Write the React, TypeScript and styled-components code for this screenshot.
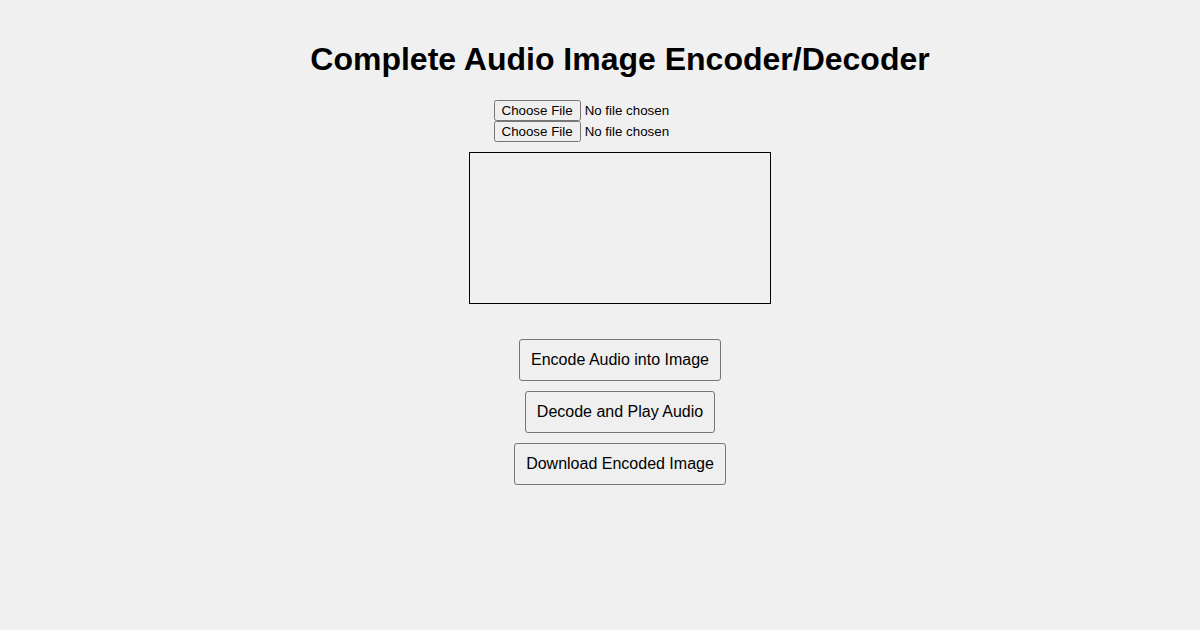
import React from "react";
import styled, { createGlobalStyle } from "styled-components";

const Global = createGlobalStyle`
  html, body { margin: 0; padding: 0; background: #f0f0f0; }
  body { font-family: "Liberation Sans", Arial, sans-serif; }
`;

const Page = styled.div`
  padding: 20px 0 20px 40px;
  text-align: center;
  color: #000;
`;

const Title = styled.h1`
  font-size: 32px;
  font-weight: bold;
  margin: 21.44px 0;
  line-height: normal;
`;

const FileInput = styled.input`
  font-family: "Liberation Sans", Arial, sans-serif;
  font-size: 13.333px;
`;

const Canvas = styled.canvas`
  display: block;
  margin: 10px auto 0;
  border: 1px solid #000;
  width: 300px;
  height: 150px;
`;

const Actions = styled.div`
  display: flex;
  flex-direction: column;
  align-items: center;
  gap: 10px;
  margin-top: 35px;
`;

const Action = styled.button`
  font-family: "Liberation Sans", Arial, sans-serif;
  font-size: 16px;
  padding: 10px 11px;
  line-height: 20px;
  background: #efefef;
  border: 1px solid #767676;
  border-radius: 3px;
  color: #000;
`;

export default function App() {
  return (
    <>
      <Global />
      <Page>
        <Title>Complete Audio Image Encoder/Decoder</Title>
        <FileInput type="file" accept="audio/*" />
        <br />
        <FileInput type="file" accept="image/*" />
        <br />
        <Canvas width={300} height={150} />
        <Actions>
          <Action>Encode Audio into Image</Action>
          <Action>Decode and Play Audio</Action>
          <Action>Download Encoded Image</Action>
        </Actions>
      </Page>
    </>
  );
}
